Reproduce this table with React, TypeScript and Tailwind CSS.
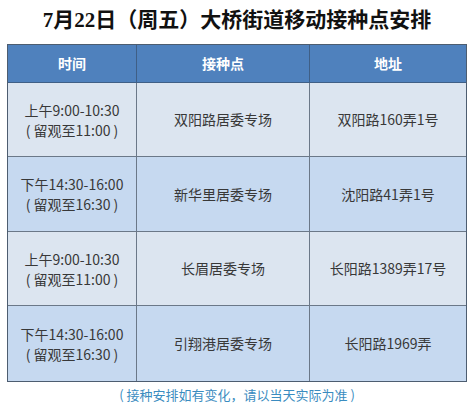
const rows = [
  { time: "上午9:00-10:30", stay: "( 留观至11:00 )", site: "双阳路居委专场", addr: "双阳路160弄1号", bg: "bg-[#dce5f0]" },
  { time: "下午14:30-16:00", stay: "( 留观至16:30 )", site: "新华里居委专场", addr: "沈阳路41弄1号", bg: "bg-[#c6d9f0]" },
  { time: "上午9:00-10:30", stay: "( 留观至11:00 )", site: "长眉居委专场", addr: "长阳路1389弄17号", bg: "bg-[#dce5f0]" },
  { time: "下午14:30-16:00", stay: "( 留观至16:30 )", site: "引翔港居委专场", addr: "长阳路1969弄", bg: "bg-[#c6d9f0]" },
];

export default function App() {
  return (
    <div className="w-[474px] h-[406px] bg-white overflow-hidden font-['Noto_Sans_CJK_SC',sans-serif] text-[#383838]">
      <h1 className="h-[44px] pt-[6px] text-center text-[21px] leading-[28px] font-bold text-[#111] font-['Liberation_Serif','Noto_Sans_CJK_SC',serif]">
        7月22日（周五）大桥街道移动接种点安排
      </h1>
      <div className="mx-[7px] border border-[#4d5d70] grid grid-cols-[129px_173px_156px]">
        <div className="h-[38px] flex items-center justify-center bg-[#4f81bd] border-r border-b border-[#3f5f86] text-white font-bold text-[14px]">时间</div>
        <div className="h-[38px] flex items-center justify-center bg-[#4f81bd] border-r border-b border-[#3f5f86] text-white font-bold text-[14px]">接种点</div>
        <div className="h-[38px] flex items-center justify-center bg-[#4f81bd] border-b border-[#3f5f86] text-white font-bold text-[14px]">地址</div>
        {rows.map((r, i) => {
          const last = i === rows.length - 1;
          const rowH = i % 2 === 0 ? "h-[74px]" : "h-[75px]";
          return [
            <div key={`t${i}`} className={`${rowH} ${r.bg} flex flex-col items-center justify-center border-r border-[#6b7888] ${last ? "" : "border-b"} text-[14px] leading-[20px]`}>
              <span>{r.time}</span>
              <span>{r.stay}</span>
            </div>,
            <div key={`s${i}`} className={`${rowH} ${r.bg} flex items-center justify-center border-r border-[#6b7888] ${last ? "" : "border-b"} text-[14px]`}>
              {r.site}
            </div>,
            <div key={`a${i}`} className={`${rowH} ${r.bg} flex items-center justify-center border-[#6b7888] ${last ? "" : "border-b"} text-[14px]`}>
              {r.addr}
            </div>,
          ];
        })}
      </div>
      <p className="mt-[3px] text-center text-[13px] leading-[20px] text-[#3a8cc0]">( 接种安排如有变化，请以当天实际为准 )</p>
    </div>
  );
}
